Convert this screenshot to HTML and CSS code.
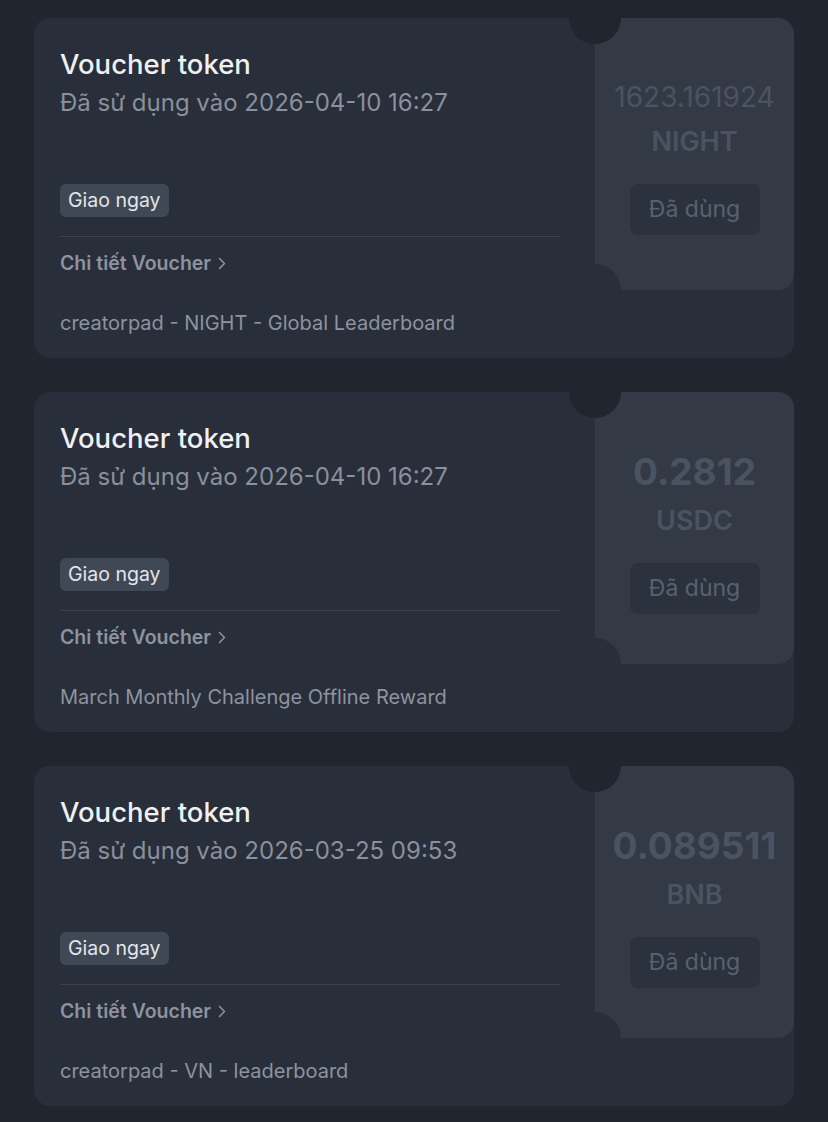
FILE: index.html
```html
<!DOCTYPE html>
<html lang="vi">

<head>
    <meta charset="UTF-8">
    <meta name="viewport" content="width=device-width, initial-scale=1.0">
    <title>Voucher</title>
    <link rel="stylesheet" href="styles.css">
</head>

<body>
    <div class="voucher-list">

        <div class="voucher-card">
            <div class="voucher-top">
                <div class="voucher-main">
                    <div class="voucher-title">Voucher token</div>
                    <div class="voucher-date">Đã sử dụng vào 2026-04-10 16:27</div>
                    <span class="voucher-tag">Giao ngay</span>
                    <div class="voucher-divider"></div>
                    <div class="voucher-link">Chi tiết Voucher
                        <svg class="chevron" width="8" height="13" viewBox="0 0 8 13"><polyline points="1.5,1.5 6.5,6.5 1.5,11.5" fill="none" stroke="currentColor" stroke-width="1.5" stroke-linecap="round" stroke-linejoin="round"/></svg>
                    </div>
                </div>
                <div class="voucher-side">
                    <span class="notch notch-top"></span>
                    <span class="notch notch-bottom"></span>
                    <div class="amount amount-small">1623.161924</div>
                    <div class="currency">NIGHT</div>
                    <div class="used-button">Đã dùng</div>
                </div>
            </div>
            <div class="voucher-footer">creatorpad - NIGHT - Global Leaderboard</div>
        </div>

        <div class="voucher-card">
            <div class="voucher-top">
                <div class="voucher-main">
                    <div class="voucher-title">Voucher token</div>
                    <div class="voucher-date">Đã sử dụng vào 2026-04-10 16:27</div>
                    <span class="voucher-tag">Giao ngay</span>
                    <div class="voucher-divider"></div>
                    <div class="voucher-link">Chi tiết Voucher
                        <svg class="chevron" width="8" height="13" viewBox="0 0 8 13"><polyline points="1.5,1.5 6.5,6.5 1.5,11.5" fill="none" stroke="currentColor" stroke-width="1.5" stroke-linecap="round" stroke-linejoin="round"/></svg>
                    </div>
                </div>
                <div class="voucher-side">
                    <span class="notch notch-top"></span>
                    <span class="notch notch-bottom"></span>
                    <div class="amount">0.2812</div>
                    <div class="currency">USDC</div>
                    <div class="used-button">Đã dùng</div>
                </div>
            </div>
            <div class="voucher-footer">March Monthly Challenge Offline Reward</div>
        </div>

        <div class="voucher-card">
            <div class="voucher-top">
                <div class="voucher-main">
                    <div class="voucher-title">Voucher token</div>
                    <div class="voucher-date">Đã sử dụng vào 2026-03-25 09:53</div>
                    <span class="voucher-tag">Giao ngay</span>
                    <div class="voucher-divider"></div>
                    <div class="voucher-link">Chi tiết Voucher
                        <svg class="chevron" width="8" height="13" viewBox="0 0 8 13"><polyline points="1.5,1.5 6.5,6.5 1.5,11.5" fill="none" stroke="currentColor" stroke-width="1.5" stroke-linecap="round" stroke-linejoin="round"/></svg>
                    </div>
                </div>
                <div class="voucher-side">
                    <span class="notch notch-top"></span>
                    <span class="notch notch-bottom"></span>
                    <div class="amount">0.089511</div>
                    <div class="currency">BNB</div>
                    <div class="used-button">Đã dùng</div>
                </div>
            </div>
            <div class="voucher-footer">creatorpad - VN - leaderboard</div>
        </div>

    </div>
</body>

</html>
```

FILE: styles.css
```css
body {
    margin: 0;
    background-color: #21252e;
    font-family: Inter, "Noto Sans", sans-serif;
    color: #eaecef;
}

.voucher-list {
    display: flex;
    flex-direction: column;
    gap: 34px;
    padding: 18px 34px 16px 34px;
}

.voucher-card {
    background-color: #282e3a;
    border-radius: 16px;
    overflow: hidden;
}

.voucher-top {
    display: flex;
    height: 272px;
}

.voucher-main {
    flex: 1;
    display: flex;
    flex-direction: column;
    align-items: flex-start;
    padding: 29px 35px 0 26px;
}

.voucher-title {
    font-size: 27.5px;
    font-weight: 500;
    line-height: 34px;
    color: #eef0f3;
}

.voucher-date {
    margin-top: 7px;
    font-size: 24px;
    line-height: 30px;
    color: #8a909c;
}

.voucher-tag {
    margin-top: 66px;
    height: 33px;
    line-height: 33px;
    padding: 0 8px;
    border-radius: 6px;
    background-color: #404856;
    font-size: 19.5px;
    color: #e2e5ea;
}

.voucher-divider {
    align-self: stretch;
    height: 1px;
    margin-top: 19px;
    background-color: #3a414d;
}

.voucher-link {
    display: flex;
    align-items: center;
    gap: 7px;
    margin-top: 12px;
    font-size: 19.5px;
    font-weight: 600;
    line-height: 28px;
    color: #8d939f;
}

.chevron {
    margin-top: 1px;
}

.voucher-side {
    position: relative;
    width: 199px;
    display: flex;
    flex-direction: column;
    align-items: center;
    padding-top: 58px;
    box-sizing: border-box;
    background-color: #333a46;
    border-bottom-right-radius: 16px;
}

.notch {
    position: absolute;
    left: -26px;
    width: 52px;
    height: 52px;
    border-radius: 50%;
}

.notch-top {
    top: -26px;
    background-color: #21252e;
}

.notch-bottom {
    bottom: -26px;
    background-color: #282e3a;
}

.amount {
    margin-bottom: 10px;
    font-size: 37px;
    font-weight: 700;
    line-height: 44px;
    color: #4b5361;
}

.amount-small {
    margin-bottom: 7px;
    font-size: 28px;
    font-weight: 400;
    line-height: 42px;
}

.currency {
    font-size: 27px;
    font-weight: 600;
    line-height: 34px;
    color: #4b5361;
}

.used-button {
    margin-top: 25px;
    width: 130px;
    height: 51px;
    line-height: 51px;
    text-align: center;
    border-radius: 8px;
    background-color: #2b313d;
    font-size: 23px;
    color: #59616e;
}

.voucher-footer {
    padding: 19px 26px 21px 26px;
    font-size: 20px;
    line-height: 28px;
    color: #8d939f;
}
```
